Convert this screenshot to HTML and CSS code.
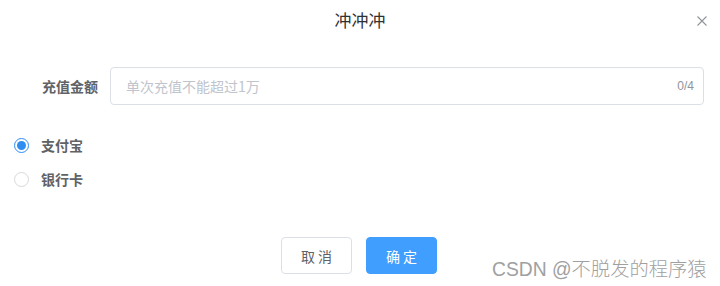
FILE: index.html
```html
<!DOCTYPE html>
<html lang="zh">
<head>
<meta charset="utf-8">
<link rel="stylesheet" href="styles.css">
</head>
<body>
<div class="dialog">
  <div class="header">
    <span class="title">冲冲冲</span>
    <span class="close"><svg width="10" height="10" viewBox="0 0 10 10"><path d="M0.5 0.5 L9.5 9.5 M9.5 0.5 L0.5 9.5" stroke="#909399" stroke-width="1.1" fill="none"/></svg></span>
  </div>
  <div class="body">
    <div class="form-item">
      <label class="label">充值金额</label>
      <div class="input">
        <span class="placeholder">单次充值不能超过1万</span>
        <span class="count">0/4</span>
      </div>
    </div>
    <div class="radios">
      <div class="radio"><span class="circle checked"><span class="dot"></span></span><span class="rtext">支付宝</span></div>
      <div class="radio"><span class="circle"></span><span class="rtext">银行卡</span></div>
    </div>
  </div>
  <div class="footer">
    <button class="btn">取 消</button>
    <button class="btn primary">确 定</button>
  </div>
  <div class="watermark">CSDN @不脱发的程序猿</div>
</div>
</body>
</html>
```
FILE: styles.css
```css
* { box-sizing: border-box; }
html, body { margin: 0; padding: 0; background: #fff; }
body { font-family: "Noto Sans CJK SC", "Noto Sans", sans-serif; width: 720px; height: 286px; overflow: hidden; }
.dialog { position: relative; width: 720px; height: 286px; }
.header { position: relative; height: 40px; display: flex; align-items: center; justify-content: center; }
.title { font-size: 17px; color: #303133; line-height: 24px; }
.close { position: absolute; right: 13px; top: 16px; width: 10px; height: 10px; display: flex; }
.body { padding: 27px 16px 0 0; }
.form-item { display: flex; align-items: center; }
.label { width: 110px; padding-right: 12px; text-align: right; font-size: 14px; font-weight: bold; color: #606266; }
.input { flex: 1; height: 38px; border: 1px solid #dcdfe6; border-radius: 4px; display: flex; align-items: center; justify-content: space-between; padding: 0 9px 0 15px; }
.placeholder { font-size: 14px; color: #c0c4cc; }
.count { font-size: 12px; color: #909399; font-family: "Liberation Sans", sans-serif; }
.radios { padding-left: 14px; margin-top: 30px; display: flex; flex-direction: column; gap: 14px; }
.radio { display: flex; align-items: center; height: 20px; }
.circle { width: 15px; height: 15px; border-radius: 50%; border: 1px solid #d8d8d8; display: flex; align-items: center; justify-content: center; margin-right: 12px; }
.circle.checked { border: 1.5px solid #2f8cf0; }
.dot { width: 9px; height: 9px; border-radius: 50%; background: #2f8cf0; }
.rtext { font-size: 14px; font-weight: bold; color: #606266; }
.footer { display: flex; justify-content: center; gap: 14px; margin-top: 48px; padding-right: 2px; }
.btn { width: 71px; height: 37px; border: 1px solid #dcdfe6; border-radius: 4px; background: #fff; color: #606266; font-size: 14px; font-family: "Noto Sans CJK SC", sans-serif; padding: 0; }
.btn.primary { background: #409eff; border-color: #409eff; color: #fff; }
.watermark { position: absolute; left: 492px; top: 254px; font-size: 19.3px; color: #a0a0a0; text-shadow: 1px 1px 1px #fff; font-family: "Liberation Sans", "Noto Sans CJK SC", sans-serif; font-weight: 300; white-space: nowrap; }
```
